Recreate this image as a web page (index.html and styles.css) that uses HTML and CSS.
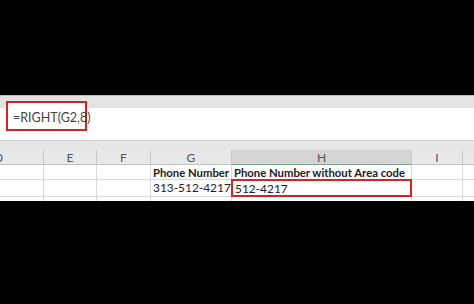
FILE: index.html
```html
<!DOCTYPE html>
<html>
<head>
<meta charset="utf-8">
<link rel="stylesheet" href="styles.css">
</head>
<body>
<div class="frame">
  <div class="bar-top"></div>
  <div class="app">
    <div class="ribbon-strip"></div>
    <div class="formula-bar">
      <div class="formula-box">=RIGHT(G2,8)</div>
    </div>
    <div class="gap"></div>
    <div class="grid">
      <div class="hdr">D</div>
      <div class="hdr">E</div>
      <div class="hdr">F</div>
      <div class="hdr">G</div>
      <div class="hdr sel">H</div>
      <div class="hdr">I</div>
      <div class="hdr last"></div>

      <div class="cell"></div>
      <div class="cell"></div>
      <div class="cell"></div>
      <div class="cell bold">Phone Number</div>
      <div class="cell bold">Phone Number without Area code</div>
      <div class="cell"></div>
      <div class="cell last"></div>

      <div class="cell"></div>
      <div class="cell"></div>
      <div class="cell"></div>
      <div class="cell">313-512-4217</div>
      <div class="cell active">512-4217</div>
      <div class="cell"></div>
      <div class="cell last"></div>

      <div class="cell"></div>
      <div class="cell"></div>
      <div class="cell"></div>
      <div class="cell"></div>
      <div class="cell"></div>
      <div class="cell"></div>
      <div class="cell last"></div>
    </div>
  </div>
  <div class="bar-bottom"></div>
</div>
</body>
</html>
```
FILE: styles.css
```css
* { box-sizing: border-box; }
html, body {
  margin: 0;
  padding: 0;
  background: #000;
}
.frame {
  width: 474px;
  height: 304px;
  display: flex;
  flex-direction: column;
  background: #000;
  overflow: hidden;
  font-family: "Lato", "Open Sans", sans-serif;
}
.bar-top { height: 95px; background: #000; flex: none; }
.bar-bottom { flex: 1; background: #000; }
.app {
  height: 106px;
  flex: none;
  background: #fff;
  overflow: hidden;
  display: flex;
  flex-direction: column;
  position: relative;
}
.ribbon-strip {
  height: 13px;
  background: #e3e3e3;
  border-top: 1px solid #bdbdbd;
  flex: none;
}
.formula-bar {
  height: 33px;
  background: #fff;
  border-bottom: 1px solid #cfcfcf;
  flex: none;
  position: relative;
}
.formula-box {
  position: absolute;
  left: 6px;
  top: -7px;
  width: 81px;
  height: 30px;
  border: 2.5px solid #dc1f26;
  background: #fff;
  color: #444;
  font-size: 12.5px;
  padding: 8px 0 0 5px;
  line-height: 14px;
}
.gap {
  height: 9px;
  background: #e6e6e6;
  flex: none;
}
.grid {
  display: grid;
  grid-template-columns: 90px 53px 54px 81px 180px 51px 60px;
  grid-template-rows: 15px 15px 17px 10px;
  margin-left: -46px;
}
.hdr {
  background: #e8e8e8;
  border-right: 1px solid #c8c8c8;
  border-bottom: 1px solid #c2c2c2;
  color: #555;
  font-size: 12px;
  line-height: 14px;
  padding-top: 1px;
  text-align: center;
}
.hdr.sel {
  background: #d4d4d4;
  border-bottom: 1px solid #7fa58c;
}
.cell {
  border-right: 1px solid #dadada;
  border-bottom: 1px solid #dadada;
  font-size: 11.9px;
  line-height: 14px;
  padding-top: 1px;
  color: #222;
  padding-left: 2px;
  white-space: nowrap;
  overflow: visible;
}
.cell.bold { font-size: 11.3px; font-weight: 700; }
.cell.active { position: relative; padding-left: 3px; padding-top: 2px; }
.cell.active::after {
  content: "";
  position: absolute;
  left: -1px;
  top: -1px;
  right: -1px;
  bottom: -1px;
  border: 2.5px solid #dc1f26;
}
```
